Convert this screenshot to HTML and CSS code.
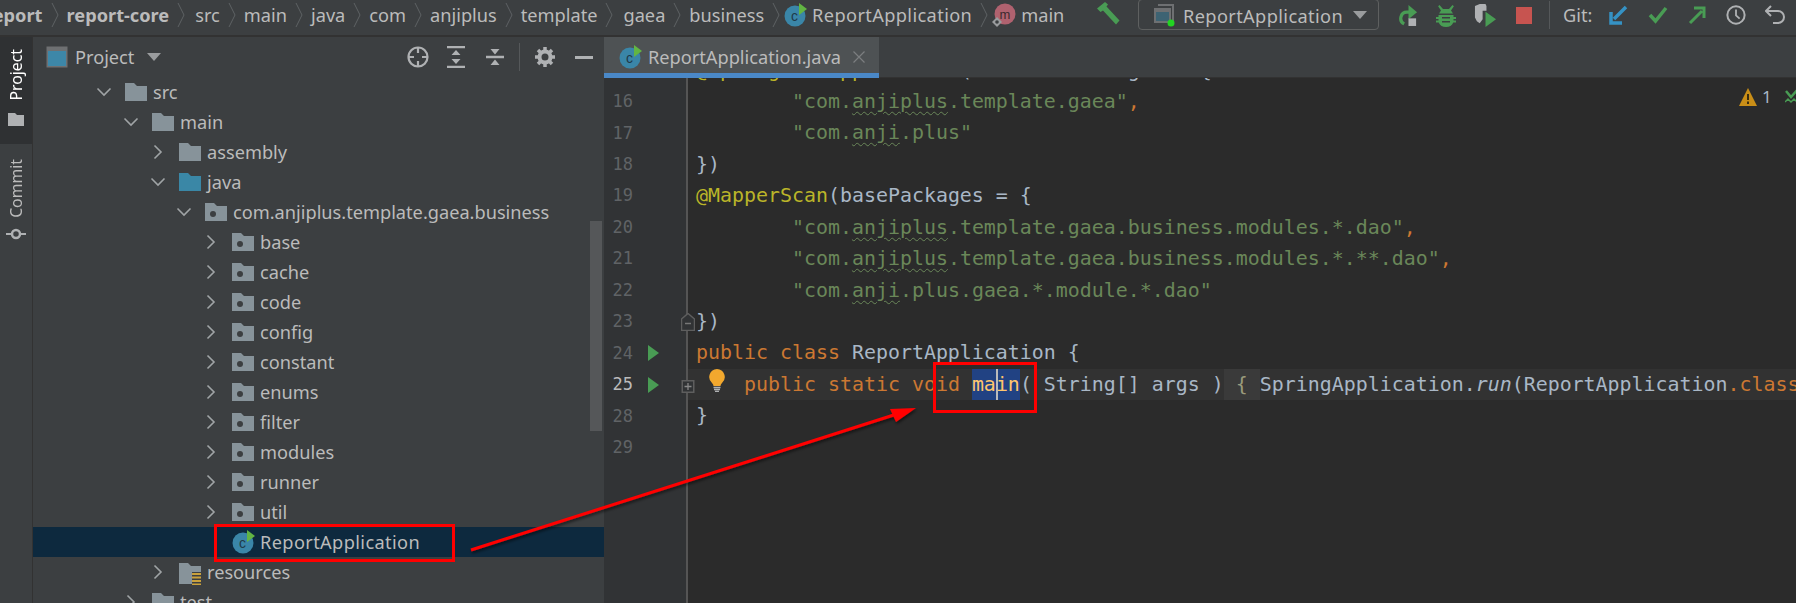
FILE: index.html
```html
<!DOCTYPE html>
<html lang="en">
<head>
<meta charset="utf-8">
<title>ReportApplication.java</title>
<link rel="stylesheet" href="styles.css">
</head>
<body>
<svg class="defs" width="0" height="0">
  <defs>
    <symbol id="folder" viewBox="0 0 22 18"><path d="M0 0h9l3 3h10v15H0z"/></symbol>
    <symbol id="pkg" viewBox="0 0 22 18"><path fill="#87939a" d="M0 0h9l3 3h10v15H0z"/><circle cx="8" cy="11" r="3" fill="#3c3f41"/></symbol>
    <symbol id="res" viewBox="0 0 22 22"><path fill="#87939a" d="M0 0h9l3 3h10v6H13v12H0z"/><path fill="#c9a13c" d="M13 10h9v2h-9zM13 13.500h9v2h-9zM13 17h9v2h-9zM13 20.500h9v1.500h-9z"/></symbol>
    <symbol id="cls" viewBox="0 0 23 24">
      <circle cx="11" cy="13" r="10.500" fill="#3a86a8"/>
      <text x="10.500" y="18" font-family="Liberation Sans" font-size="14" fill="#1f3a48" text-anchor="middle">c</text>
      <path d="M15 0l8 6-8 6z" fill="#62b543"/>
    </symbol>
    <symbol id="chevR" viewBox="0 0 10 16"><path d="M1.500 1.500L8 8l-6.500 6.500" fill="none" stroke="#a0a4a6" stroke-width="1.600"/></symbol>
    <symbol id="chevD" viewBox="0 0 16 10"><path d="M1.500 1.500L8 8l6.500-6.500" fill="none" stroke="#a0a4a6" stroke-width="1.600"/></symbol>
    <symbol id="crumb" viewBox="0 0 8 26"><path d="M1 1l6 12-6 12" fill="none" stroke="#5e6264" stroke-width="1"/></symbol>
    <symbol id="runT" viewBox="0 0 11 16"><path d="M0 0l11 8-11 8z" fill="#499c54"/></symbol>
  </defs>
</svg>

<div class="app">
  <header class="topbar">
    <nav class="crumbs">
      <b class="clip">report</b><svg class="sep"><use href="#crumb"/></svg>
      <b>report-core</b><svg class="sep roomy"><use href="#crumb"/></svg>
      <span>src</span><svg class="sep"><use href="#crumb"/></svg>
      <span>main</span><svg class="sep"><use href="#crumb"/></svg>
      <span>java</span><svg class="sep"><use href="#crumb"/></svg>
      <span>com</span><svg class="sep"><use href="#crumb"/></svg>
      <span>anjiplus</span><svg class="sep"><use href="#crumb"/></svg>
      <span>template</span><svg class="sep roomy"><use href="#crumb"/></svg>
      <span>gaea</span><svg class="sep"><use href="#crumb"/></svg>
      <span>business</span><svg class="sep tight"><use href="#crumb"/></svg>
      <svg class="ico-cls"><use href="#cls"/></svg><span class="after-ico spaced">ReportApplication</span><svg class="sep tight"><use href="#crumb"/></svg>
      <svg class="ico-m" viewBox="0 0 24 24"><circle cx="13" cy="11" r="10.500" fill="#b0626f"/><text x="13" y="15.500" font-family="Liberation Sans" font-size="13" fill="#3c2a2e" text-anchor="middle">m</text><path d="M5 14l5 5-5 5-5-5z" fill="#9a9c9e"/><circle cx="5" cy="19" r="1.800" fill="#3c3f41"/></svg><span class="after-ico">main</span>
    </nav>
    <svg class="hammer" viewBox="0 0 24 24"><path d="M0 6.500L8 0l3 2.500-1.500 2 13 14-3.500 4L6 8.500 3.500 10z" fill="#499c54"/></svg>
    <div class="runcfg">
      <svg class="cfg-ico" viewBox="0 0 22 24"><path d="M5 1h16v17h-2V3H5z" fill="#6e7072"/><rect x="1" y="5" width="17" height="15" fill="#6e7072"/><rect x="3" y="9" width="13" height="9" fill="#3d6373"/><circle cx="18" cy="20" r="3.500" fill="#22d422"/></svg>
      <span class="cfg-name spaced">ReportApplication</span>
      <i class="tri"></i>
    </div>
    <div class="tools">
      <svg class="t" viewBox="0 0 21 24"><path d="M12 8.500H9.500a6.500 6.500 0 0 0-3 12.300" fill="none" stroke="#499c54" stroke-width="3.400"/><path d="M11 1l9 7.500-9 7.500z" fill="#499c54"/><rect x="11" y="15" width="8" height="8" fill="#afb1b3"/></svg>
      <svg class="t" viewBox="0 0 20 23"><path d="M3.500 1l3.500 4h6l3.500-4 1.400 1.300L15 6.500l2 3H3l2-3-2.900-4.200zM2.500 11h15v2H20v2h-2.500v1.500H20v2h-2.700C16 21.500 13.500 23 10 23s-6-1.500-7.300-4.500H0v-2h2.500V15H0v-2h2.500z" fill="#499c54"/><path d="M6 13.800h8M6 17.800h8" stroke="#3c3f41" stroke-width="1.500"/></svg>
      <svg class="t wide" viewBox="0 0 24 24"><path d="M1 2l5-2h6l1 2v5H9v9l-3 4-3-2-2-4z" fill="#afb1b3"/><path d="M12 8l11 8-11 8z" fill="#499c54"/></svg>
      <svg class="t stop" viewBox="0 0 16 17"><rect width="16" height="17" fill="#c75450"/></svg>
      <i class="vsep"></i>
      <span class="git">Git:</span>
      <svg class="t g" viewBox="0 0 20 20"><path d="M17 2L5 14M2 7v11h11" fill="none" stroke="#3592c4" stroke-width="3.500"/></svg>
      <svg class="t g" viewBox="0 0 20 20"><path d="M2 10l5.500 6L18 3" fill="none" stroke="#499c54" stroke-width="3.500"/></svg>
      <svg class="t g" viewBox="0 0 20 20"><path d="M3 18L15 6M7 3h10v10" fill="none" stroke="#499c54" stroke-width="3"/></svg>
      <svg class="t g" viewBox="0 0 22 22"><circle cx="11" cy="11" r="9.500" fill="none" stroke="#afb1b3" stroke-width="2.200"/><path d="M11 5v6.500l4 3.500" fill="none" stroke="#afb1b3" stroke-width="2"/></svg>
      <svg class="t g" viewBox="0 0 20 20"><path d="M6 1L1 6l5 5M1 6h12a5.500 5.500 0 0 1 0 12H8" fill="none" stroke="#afb1b3" stroke-width="2"/></svg>
    </div>
  </header>

  <main class="workspace">
    <aside class="stripe">
      <div class="stab active">
        <span class="vtext">Project</span>
        <svg class="stab-ico" viewBox="0 0 16 13"><path d="M0 0h7l2 2h7v11H0z" fill="#afb1b3"/></svg>
      </div>
      <div class="stab">
        <span class="vtext">Commit</span>
        <svg class="stab-ico2" viewBox="0 0 20 12"><path d="M0 6h20" stroke="#afb1b3" stroke-width="2"/><circle cx="10" cy="6" r="4" fill="#3c3f41" stroke="#afb1b3" stroke-width="2.500"/></svg>
      </div>
    </aside>

    <section class="project">
      <div class="phead">
        <svg class="pico" viewBox="0 0 22 22"><rect x="0.500" y="0.500" width="21" height="21" fill="#6e7072"/><rect x="2" y="5" width="18" height="15" fill="#3d87a8"/></svg>
        <span class="ptitle">Project</span>
        <i class="tri ptri"></i>
        <div class="pbtns">
          <svg class="pb" viewBox="0 0 22 22"><circle cx="11" cy="11" r="9.500" fill="none" stroke="#afb1b3" stroke-width="2.200"/><path d="M11 1v6M11 15v6M1 11h6M15 11h6" stroke="#afb1b3" stroke-width="2.200"/></svg>
          <svg class="pb" viewBox="0 0 18 22"><path d="M0 1h18M0 21h18" stroke="#afb1b3" stroke-width="2.500"/><path d="M9 4l4.500 5h-9zM9 18l4.500-5h-9z" fill="#afb1b3"/></svg>
          <svg class="pb" viewBox="0 0 18 22"><path d="M0 11h18" stroke="#afb1b3" stroke-width="2.500"/><path d="M9 8.500L4.500 3h9zM9 13.500l4.500 5.500h-9z" fill="#afb1b3"/></svg>
          <i class="pvsep"></i>
          <svg class="pb gear" viewBox="0 0 20 20"><circle cx="10" cy="10" r="5.500" fill="none" stroke="#afb1b3" stroke-width="4"/><path d="M10 0v4M10 16v4M0 10h4M16 10h4M3 3l3 3M14 14l3 3M3 17l3-3M14 6l3-3" stroke="#afb1b3" stroke-width="3.500"/></svg>
          <i class="pmin"></i>
        </div>
      </div>
      <div class="tree">
        <div class="row l0"><svg class="chev"><use href="#chevD"/></svg><svg class="fld"><use href="#folder"/></svg><span>src</span></div>
        <div class="row l1"><svg class="chev"><use href="#chevD"/></svg><svg class="fld"><use href="#folder"/></svg><span>main</span></div>
        <div class="row l2"><svg class="chevr"><use href="#chevR"/></svg><svg class="fld"><use href="#folder"/></svg><span>assembly</span></div>
        <div class="row l2"><svg class="chev"><use href="#chevD"/></svg><svg class="fld src"><use href="#folder"/></svg><span>java</span></div>
        <div class="row l3"><svg class="chev"><use href="#chevD"/></svg><svg class="fld"><use href="#pkg"/></svg><span>com.anjiplus.template.gaea.business</span></div>
        <div class="row l4"><svg class="chevr"><use href="#chevR"/></svg><svg class="fld"><use href="#pkg"/></svg><span>base</span></div>
        <div class="row l4"><svg class="chevr"><use href="#chevR"/></svg><svg class="fld"><use href="#pkg"/></svg><span>cache</span></div>
        <div class="row l4"><svg class="chevr"><use href="#chevR"/></svg><svg class="fld"><use href="#pkg"/></svg><span>code</span></div>
        <div class="row l4"><svg class="chevr"><use href="#chevR"/></svg><svg class="fld"><use href="#pkg"/></svg><span>config</span></div>
        <div class="row l4"><svg class="chevr"><use href="#chevR"/></svg><svg class="fld"><use href="#pkg"/></svg><span>constant</span></div>
        <div class="row l4"><svg class="chevr"><use href="#chevR"/></svg><svg class="fld"><use href="#pkg"/></svg><span>enums</span></div>
        <div class="row l4"><svg class="chevr"><use href="#chevR"/></svg><svg class="fld"><use href="#pkg"/></svg><span>filter</span></div>
        <div class="row l4"><svg class="chevr"><use href="#chevR"/></svg><svg class="fld"><use href="#pkg"/></svg><span>modules</span></div>
        <div class="row l4"><svg class="chevr"><use href="#chevR"/></svg><svg class="fld"><use href="#pkg"/></svg><span>runner</span></div>
        <div class="row l4"><svg class="chevr"><use href="#chevR"/></svg><svg class="fld"><use href="#pkg"/></svg><span>util</span></div>
        <div class="row l4 selected"><i class="chevgap"></i><svg class="fld cl"><use href="#cls"/></svg><span class="spaced">ReportApplication</span></div>
        <div class="row l2"><svg class="chevr"><use href="#chevR"/></svg><svg class="fld rs"><use href="#res"/></svg><span>resources</span></div>
        <div class="row l1"><svg class="chevr"><use href="#chevR"/></svg><svg class="fld"><use href="#folder"/></svg><span>test</span></div>
      </div>
      <div class="pscroll"></div>
    </section>

    <section class="editor">
      <div class="tabs">
        <div class="tab">
          <svg class="tab-ico"><use href="#cls"/></svg>
          <span>ReportApplication.java</span>
          <svg class="tab-x" viewBox="0 0 12 12"><path d="M0.500 0.500l11 11M11.500 0.500l-11 11" stroke="#7b7e80" stroke-width="1.200"/></svg>
        </div>
      </div>
      <div class="code">
        <div class="lines">
          <div class="line"><div class="gut"><span class="num">15</span></div><pre><span class="an">@SpringBootApplication</span>(scanBasePackages = {</pre></div>
          <div class="line"><div class="gut"><span class="num">16</span></div><pre>        <span class="st">"com.<u>anjiplus</u>.template.gaea"</span><span class="kw">,</span></pre></div>
          <div class="line"><div class="gut"><span class="num">17</span></div><pre>        <span class="st">"com.<u>anji</u>.plus"</span></pre></div>
          <div class="line"><div class="gut"><span class="num">18</span></div><pre>})</pre></div>
          <div class="line"><div class="gut"><span class="num">19</span></div><pre><span class="an">@MapperScan</span>(basePackages = {</pre></div>
          <div class="line"><div class="gut"><span class="num">20</span></div><pre>        <span class="st">"com.<u>anjiplus</u>.template.gaea.business.modules.*.dao"</span><span class="kw">,</span></pre></div>
          <div class="line"><div class="gut"><span class="num">21</span></div><pre>        <span class="st">"com.<u>anjiplus</u>.template.gaea.business.modules.*.**.dao"</span><span class="kw">,</span></pre></div>
          <div class="line"><div class="gut"><span class="num">22</span></div><pre>        <span class="st">"com.<u>anji</u>.plus.gaea.*.module.*.dao"</span></pre></div>
          <div class="line"><div class="gut"><span class="num">23</span><svg class="fold" viewBox="0 0 14 18"><path d="M7 .5L13.500 6v11.500H.5V6z" fill="#313335" stroke="#5e5e5e" stroke-width="1.500"/><path d="M4 10.500h6" stroke="#777" stroke-width="1.500"/></svg></div><pre>})</pre></div>
          <div class="line"><div class="gut"><span class="num">24</span><svg class="run"><use href="#runT"/></svg></div><pre><span class="kw">public class </span>ReportApplication {</pre></div>
          <div class="line cur"><div class="gut"><span class="num">25</span><svg class="run"><use href="#runT"/></svg><svg class="fold plus" viewBox="0 0 13 13"><rect x=".75" y=".75" width="11.500" height="11.500" fill="#313335" stroke="#5e5e5e" stroke-width="1.500"/><path d="M3 6.500h7M6.500 3v7" stroke="#888" stroke-width="1.300"/></svg></div><pre>    <span class="kw">public static void </span><span class="sel">ma<i class="caret"></i>in</span>( String[] args )<span class="foldbg"> { </span>SpringApplication.<em>run</em>(ReportApplication<span class="kw">.class</span>, args);<span class="foldbg"> }</span></pre><svg class="bulb" viewBox="0 0 16 23"><path d="M8 0a8 8 0 0 1 5 14c-1 1-1.500 2-1.500 3h-7c0-1-.5-2-1.500-3A8 8 0 0 1 8 0z" fill="#f2a82e"/><path d="M4.500 18.500h7M5 20.500h6M6 22.500h4" stroke="#afb1b3" stroke-width="1.300"/></svg></div>
          <div class="line"><div class="gut"><span class="num">28</span></div><pre>}</pre></div>
          <div class="line"><div class="gut"><span class="num">29</span></div><pre></pre></div>
          <div class="line blank"><div class="gut"></div><pre></pre></div>
          <div class="line blank"><div class="gut"></div><pre></pre></div>
          <div class="line blank"><div class="gut"></div><pre></pre></div>
          <div class="line blank"><div class="gut"></div><pre></pre></div>
          <div class="line blank"><div class="gut"></div><pre></pre></div>
          <div class="line blank"><div class="gut"></div><pre></pre></div>
        </div>
        <div class="inspect">
          <svg class="warn" viewBox="0 0 18 18"><path d="M9 0l9 18H0z" fill="#c98e17"/><path d="M9 6v6M9 13.500v2.500" stroke="#3a2d10" stroke-width="2"/></svg>
          <span>1</span>
          <svg class="okw" viewBox="0 0 16 18"><path d="M1 3l5 6L14 0" fill="none" stroke="#499c54" stroke-width="2.500"/><path d="M0 14l3-3 3 3 3-3 3 3 3-3" fill="none" stroke="#499c54" stroke-width="1.500"/></svg>
        </div>
      </div>
    </section>
  </main>
</div>

<svg class="annot" viewBox="0 0 1796 603" width="1796" height="603">
  <defs><filter id="sh" x="-5%" y="-20%" width="110%" height="140%"><feDropShadow dx="1" dy="2" stdDeviation="1.500" flood-color="#000" flood-opacity=".55"/></filter></defs>
  <rect x="215.500" y="525.500" width="238" height="35" fill="none" stroke="#f00" stroke-width="3"/>
  <rect x="934.500" y="363.500" width="101" height="48" fill="none" stroke="#f00" stroke-width="3"/>
  <g filter="url(#sh)">
    <path d="M471 550L900 413" stroke="#f00" stroke-width="3" fill="none"/>
    <path d="M916 408L890 409L896 422z" fill="#f00"/>
  </g>
</svg>
</body>
</html>
```
FILE: styles.css
```css
* { box-sizing: border-box; }
html, body { margin: 0; height: 603px; overflow: hidden; background: #3c3f41; }
body { position: relative; font-family: "Noto Sans", "Open Sans", sans-serif; font-size: 18.200px; color: #bbbbbb; }
.defs { position: absolute; }
.app { width: 1796px; height: 603px; display: flex; flex-direction: column; }
.spaced { letter-spacing: .38px; }

.topbar { height: 37px; flex: none; display: flex; align-items: flex-start; background: #3c3f41; border-bottom: 2px solid #323232; overflow: hidden; }
.crumbs { display: flex; align-items: center; height: 30px; white-space: nowrap; width: 1097px; flex: none; overflow: hidden; }
.crumbs .clip { margin-left: -15px; }
.sep { width: 8px; height: 26px; margin: 0 8px 0 8px; flex: none; }
.sep.roomy { margin-right: 10px; }
.sep.tight { margin-right: 4px; }
.ico-cls { width: 23px; height: 24px; flex: none; margin-left: 0; }
.ico-m { width: 24px; height: 24px; flex: none; }
.after-ico { margin-left: 5px; }
.hammer { width: 24px; height: 24px; margin-top: 2px; flex: none; }
.runcfg { width: 241px; height: 31px; margin: -1px 0 0 17px; flex: none; border: 1px solid #5e6060; border-radius: 4px; display: flex; align-items: center; padding-left: 14px; }
.cfg-ico { width: 22px; height: 24px; flex: none; }
.cfg-name { margin-left: 8px; padding-top: 2px; }
.tri { display: block; width: 0; height: 0; border-left: 7px solid transparent; border-right: 7px solid transparent; border-top: 8px solid #9a9c9e; }
.runcfg .tri { margin-left: 10px; }
.tools { display: flex; align-items: center; height: 30px; margin-left: 19px; }
.t { width: 20px; height: 23px; flex: none; margin-right: 18px; }
.t.wide { width: 23px; margin-right: 19px; }
.t.stop { width: 16px; height: 17px; margin-right: 17px; }
.vsep { width: 1px; height: 28px; background: #55585a; margin-right: 13px; }
.git { width: 29px; margin-right: 17px; }
.t.g { width: 20px; height: 20px; margin-right: 19px; }

.workspace { flex: 1; display: flex; min-height: 0; }
.stripe { width: 33px; flex: none; border-right: 1px solid #323232; background: #3c3f41; }
.stab { display: flex; flex-direction: column; align-items: center; }
.stab.active { height: 107px; background: #2f3133; padding-top: 12px; color: #fff; }
.stab:not(.active) { padding-top: 15px; }
.vtext { writing-mode: vertical-rl; transform: rotate(180deg); font-size: 15.800px; line-height: 32px; }
.stab-ico { width: 16px; height: 13px; margin-top: 12px; }
.stab-ico2 { width: 20px; height: 12px; margin-top: 10px; }

.project { width: 571px; flex: none; position: relative; background: #3c3f41; overflow: hidden; }
.phead { height: 40px; display: flex; align-items: center; padding-left: 13px; }
.pico { width: 22px; height: 22px; }
.ptitle { margin-left: 7px; }
.ptri { margin-left: 13px; }
.pbtns { margin-left: auto; display: flex; align-items: center; padding-right: 11px; }
.pb { width: 18px; height: 22px; margin-right: 21px; }
.pb:first-child { width: 22px; margin-right: 18px; }
.pvsep { width: 1px; height: 28px; background: #55585a; margin: 0 15px 0 -6px; }
.pb.gear { width: 20px; height: 20px; margin-right: 20px; }
.pmin { width: 18px; height: 3px; background: #afb1b3; display: block; }

.row { height: 30px; display: flex; align-items: center; white-space: nowrap; }
.l0 { padding-left: 63px; }
.l1 { padding-left: 90px; }
.l2 { padding-left: 117px; }
.l3 { padding-left: 143px; }
.l4 { padding-left: 170px; }
.row.selected { background: #0d293e; }
.chev { width: 16px; height: 10px; margin-right: 13px; flex: none; }
.chevr { width: 10px; height: 16px; margin: 0 16px 0 3px; flex: none; }
.chevgap { width: 29px; flex: none; }
.fld { width: 22px; height: 18px; fill: #87939a; margin-right: 6px; flex: none; }
.fld.src { fill: #3a87a6; }
.fld.cl { width: 23px; height: 24px; margin-right: 5px; }
.fld.rs { height: 22px; margin-top: 4px; }
.pscroll { position: absolute; left: 557px; top: 184px; width: 12px; height: 210px; background: #555759; }

.editor { flex: 1; min-width: 0; display: flex; flex-direction: column; background: #2b2b2b; }
.tabs { height: 41px; flex: none; background: #3c3f41; border-bottom: 1px solid #323232; }
.tab { width: 275px; height: 41px; background: #4e5254; border-bottom: 5px solid #4a88c7; display: flex; align-items: center; padding: 4px 0 0 15px; }
.tab-ico { width: 23px; height: 24px; flex: none; margin-right: 6px; }
.tab-x { width: 12px; height: 12px; margin-left: 12px; }

.code { flex: 1; position: relative; overflow: hidden; }
.lines { margin-top: -23.500px; }
.line { position: relative; height: 31.450px; display: flex; }
.gut { width: 84px; flex: none; height: 100%; background: #313335; border-right: 2px solid #555555; display: flex; align-items: center; position: relative; }
.num { width: 29px; text-align: right; font: 17px/1 "DejaVu Sans Mono", monospace; color: #606366; }
.cur .num { color: #bbbbbb; }
.cur { background: #323232; }
.run { width: 11px; height: 16px; margin-left: 15px; }
.fold { position: absolute; left: 77px; top: 7px; width: 14px; height: 18px; }
.fold.plus { top: 11px; height: 13px; }
pre { margin: 0; padding-left: 8px; font: 19.930px/31.450px "DejaVu Sans Mono", monospace; color: #a9b7c6; white-space: pre; }
.an { color: #bbb529; }
.st { color: #6a8759; }
.st u { text-decoration: underline wavy #6a8759 1px; text-underline-offset: 3px; }
.kw { color: #cc7832; }
.sel { display: inline-block; position: relative; background: #214283; color: #ffc66d; height: 31px; }
.caret { position: absolute; left: 24px; top: 0; width: 2px; height: 31px; background: #bbbbbb; }
.foldbg { display: inline-block; height: 31px; background: #3a3a3a; color: #9a9a7c; }
em { font-style: italic; }
.bulb { position: absolute; left: 105px; top: 0; width: 16px; height: 23px; }
.inspect { position: absolute; top: 9px; right: 0; width: 57px; display: flex; align-items: center; color: #a9b7c6; font-size: 17px; line-height: 20px; overflow: hidden; }
.warn { width: 18px; height: 18px; flex: none; }
.inspect span { margin-left: 5px; }
.okw { width: 16px; height: 18px; flex: none; margin-left: 13px; }

.annot { position: absolute; left: 0; top: 0; pointer-events: none; }
```
